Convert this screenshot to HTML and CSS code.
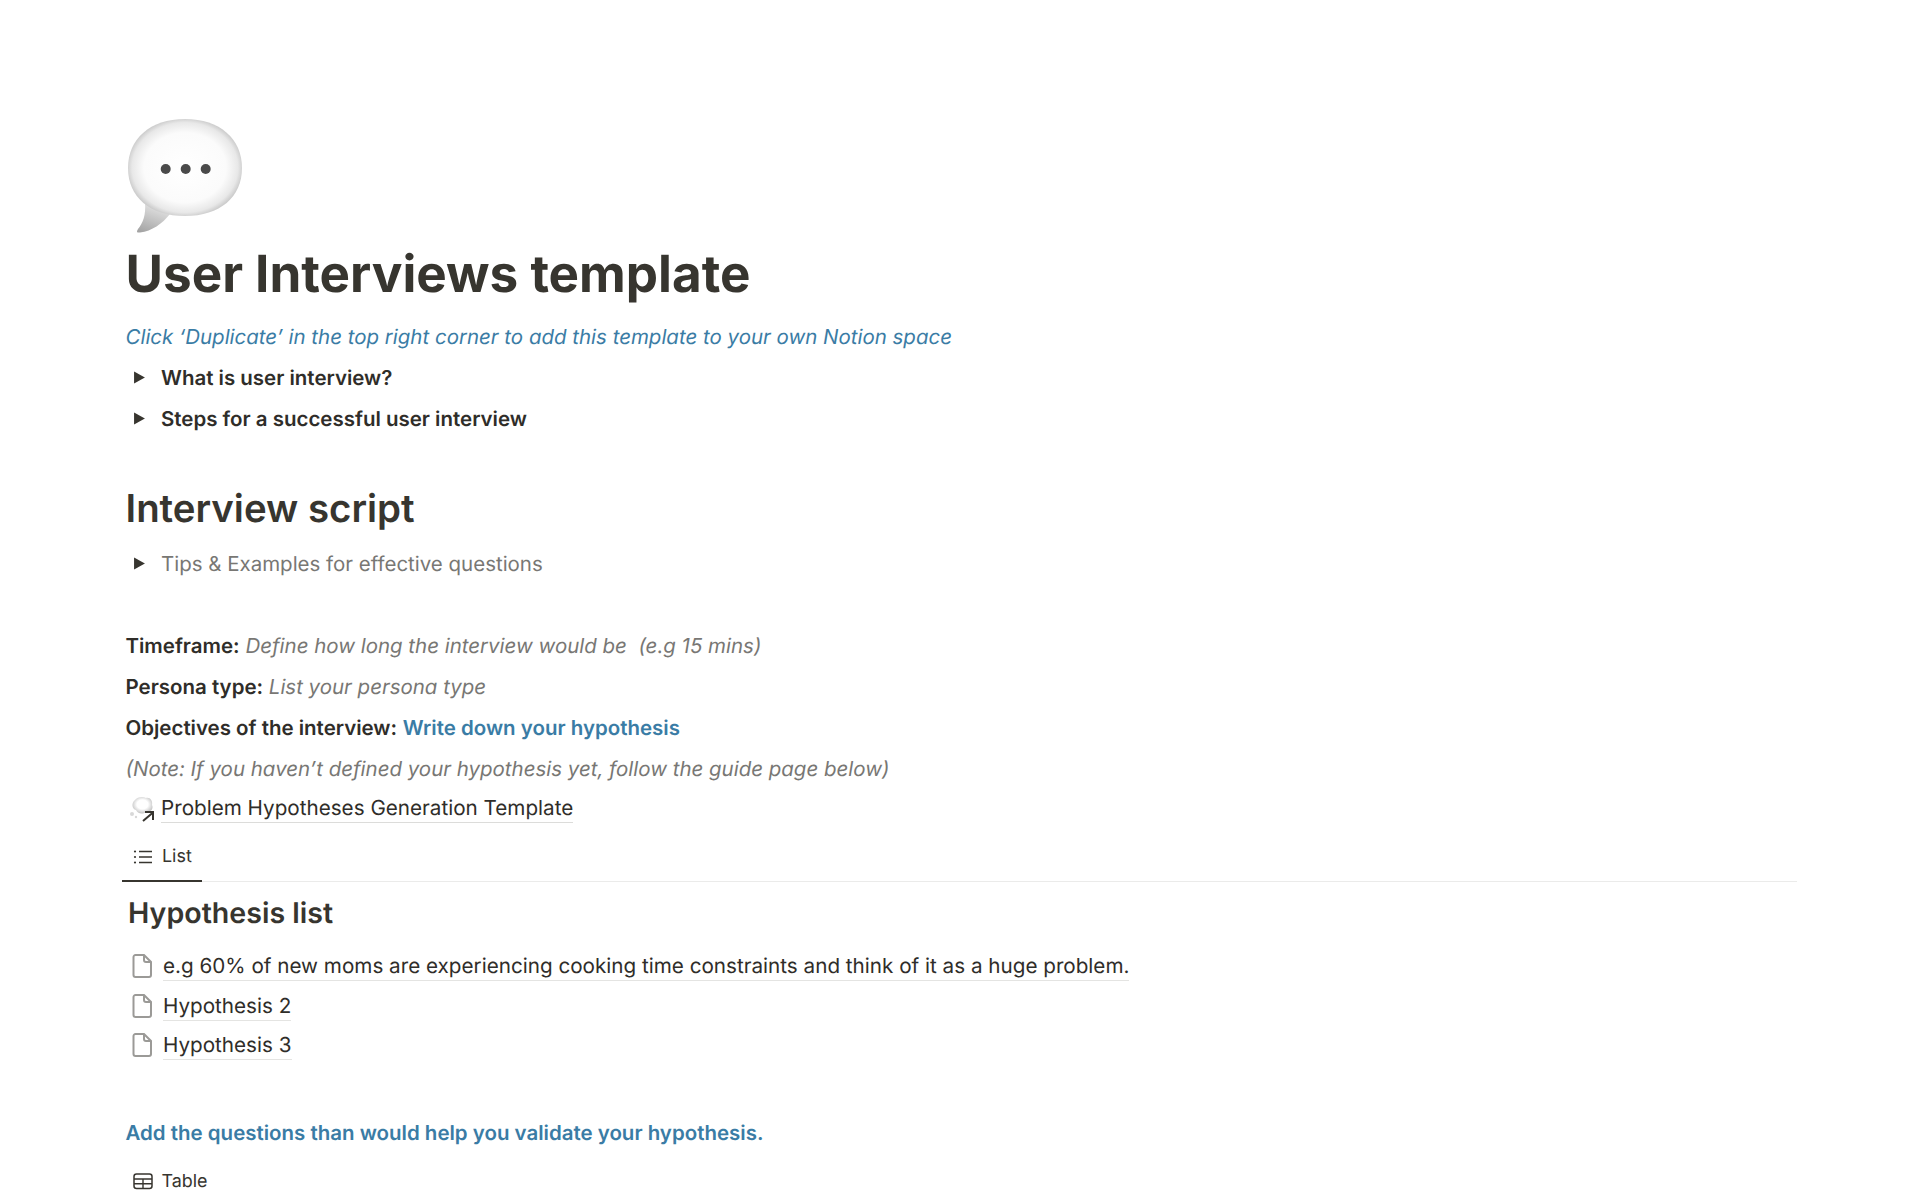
FILE: index.html
```html
<!DOCTYPE html>
<html lang="en">
<head>
<meta charset="utf-8">
<title>User Interviews template</title>
<link rel="stylesheet" href="styles.css">
</head>
<body>
<main class="page">
  <svg class="page-icon" viewBox="0 0 114 114" aria-hidden="true">
    <defs>
      <radialGradient id="bub" cx="50%" cy="50%" r="58%">
        <stop offset="0" stop-color="#fff"/>
        <stop offset="0.62" stop-color="#fbfbfb"/>
        <stop offset="0.8" stop-color="#e8e8e8"/>
        <stop offset="0.95" stop-color="#b4b4b4"/>
        <stop offset="1" stop-color="#a0a0a0"/>
      </radialGradient>
      <linearGradient id="tail" x1="0.6" y1="0" x2="0.2" y2="1">
        <stop offset="0" stop-color="#e6e6e6"/>
        <stop offset="1" stop-color="#a4a4a4"/>
      </linearGradient>
    </defs>
    <path d="M17 84 C18 96 15 104 10 110 C8 113 9 114 12 113.500 C24 112 34 105 42 95 Z" fill="url(#tail)"/>
    <path d="M57 0 C92 0 114 20 114 49 C114 78 92 97 57 97 C22 97 0 78 0 49 C0 20 22 0 57 0 Z" fill="url(#bub)"/>
    <circle cx="37.700" cy="50" r="5" fill="#4a4a4a"/>
    <circle cx="57.700" cy="50" r="5" fill="#4a4a4a"/>
    <circle cx="77.700" cy="50" r="5" fill="#4a4a4a"/>
  </svg>
  <h1 class="title">User Interviews template</h1>
  <p class="line line-first"><em class="blue">Click ‘Duplicate’ in the top right corner to add this template to your own Notion space</em></p>

  <div class="toggle"><svg class="caret" viewBox="0 0 12 12"><path d="M1 0.500 L11 6 L1 11.500 Z"/></svg><strong class="dark">What is user interview?</strong></div>
  <div class="toggle"><svg class="caret" viewBox="0 0 12 12"><path d="M1 0.500 L11 6 L1 11.500 Z"/></svg><strong class="dark">Steps for a successful user interview</strong></div>

  <h2 class="heading">Interview script</h2>
  <div class="toggle"><svg class="caret" viewBox="0 0 12 12"><path d="M1 0.500 L11 6 L1 11.500 Z"/></svg><span class="grey">Tips &amp; Examples for effective questions</span></div>

  <p class="line line-gap"><strong class="dark">Timeframe:</strong> <em class="grey">Define how long the interview would be&nbsp; (e.g 15 mins)</em></p>
  <p class="line"><strong class="dark">Persona type:</strong> <em class="grey">List your persona type</em></p>
  <p class="line"><strong class="dark">Objectives of the interview:</strong> <strong class="blue">Write down your hypothesis</strong></p>
  <p class="line"><em class="grey">(Note: If you haven’t defined your hypothesis yet, follow the guide page below)</em></p>

  <div class="page-link">
    <svg class="link-icon" viewBox="0 0 26 26" aria-hidden="true">
      <defs><radialGradient id="cl" cx="50%" cy="45%" r="55%"><stop offset="0.5" stop-color="#fff"/><stop offset="1" stop-color="#c4c4c4"/></radialGradient></defs>
      <path d="M6 4 C8 1 14 0 17 2 C21 1 24 5 23 9 C25 13 21 17 17 16 C13 19 8 17 7 14 C3 13 2 7 6 4 Z" fill="url(#cl)"/>
      <circle cx="3" cy="18" r="2" fill="#d8d8d8"/>
      <circle cx="7" cy="21" r="1.200" fill="#d8d8d8"/>
      <path d="M14 25 L24 16.500 M16 16 L24 16 L24 24" fill="none" stroke="#37352f" stroke-width="2"/>
    </svg>
    <span class="link-text">Problem Hypotheses Generation Template</span>
  </div>

  <div class="tabs">
    <div class="tab">
      <svg class="tab-icon" viewBox="0 0 20 20" aria-hidden="true"><path d="M6 4.500 H19 M6 10 H19 M6 15.500 H19" fill="none" stroke="#37352f" stroke-width="1.400"/><circle cx="2" cy="4.500" r="1.100" fill="#37352f"/><circle cx="2" cy="10" r="1.100" fill="#37352f"/><circle cx="2" cy="15.500" r="1.100" fill="#37352f"/></svg>
      <span>List</span>
    </div>
  </div>

  <h3 class="list-title">Hypothesis list</h3>
  <ul class="items">
    <li class="item"><svg class="doc" viewBox="0 0 20 24" aria-hidden="true"><path d="M3.500 1 H12 L19 8 V21 A2 2 0 0 1 17 23 H3.500 A2 2 0 0 1 1.500 21 V3 A2 2 0 0 1 3.500 1 Z M12 1 V6 A2 2 0 0 0 14 8 H19" fill="none" stroke="#9b9a97" stroke-width="2"/></svg><span class="item-text">e.g 60% of new moms are experiencing cooking time constraints and think of it as a huge problem.</span></li>
    <li class="item"><svg class="doc" viewBox="0 0 20 24" aria-hidden="true"><path d="M3.500 1 H12 L19 8 V21 A2 2 0 0 1 17 23 H3.500 A2 2 0 0 1 1.500 21 V3 A2 2 0 0 1 3.500 1 Z M12 1 V6 A2 2 0 0 0 14 8 H19" fill="none" stroke="#9b9a97" stroke-width="2"/></svg><span class="item-text">Hypothesis 2</span></li>
    <li class="item"><svg class="doc" viewBox="0 0 20 24" aria-hidden="true"><path d="M3.500 1 H12 L19 8 V21 A2 2 0 0 1 17 23 H3.500 A2 2 0 0 1 1.500 21 V3 A2 2 0 0 1 3.500 1 Z M12 1 V6 A2 2 0 0 0 14 8 H19" fill="none" stroke="#9b9a97" stroke-width="2"/></svg><span class="item-text">Hypothesis 3</span></li>
  </ul>

  <p class="line line-cta"><strong class="blue">Add the questions than would help you validate your hypothesis.</strong></p>

  <div class="tab tab-table">
    <svg class="tab-icon" viewBox="0 0 20 20" aria-hidden="true"><rect x="1" y="3" width="18" height="14.500" rx="2.500" fill="none" stroke="#37352f" stroke-width="1.500"/><path d="M1 8 H19 M1 12.700 H19 M10 8 V17.500" fill="none" stroke="#37352f" stroke-width="1.400"/></svg>
    <span>Table</span>
  </div>
</main>
</body>
</html>
```

FILE: styles.css
```css
* { box-sizing: border-box; }
html, body { margin: 0; padding: 0; background: #fff; }
body {
  height: 1199px;
  overflow: hidden;
  font-family: Inter, "Noto Sans", sans-serif;
  font-size: 20.48px;
  color: #37352f;
  text-rendering: geometricPrecision;
}
.page { width: 1920px; padding: 119px 123px 0 125.5px; }
.page-icon { display: block; width: 114px; height: 114px; margin-left: 2.5px; }
.title {
  margin: 12px 0 0;
  font-size: 51.2px;
  line-height: 58px;
  font-weight: 700;
  color: #37352f;
}
.line { margin: 0; height: 41px; line-height: 41px; white-space: pre-wrap; }
.line-first { margin-top: 13px; margin-bottom: -0.500px; }
.line-gap { margin-top: 41px; }
.line-cta { margin-top: 47px; }
em { font-style: italic; }
strong { font-weight: 600; }
.blue { color: #3a7ca5; }
.grey { color: #787774; }
.dark { color: #2f2d29; }
.toggle { display: flex; align-items: center; height: 41px; }
.caret { width: 13px; height: 13px; margin: 0 15px 0 7.500px; fill: #37352f; flex: none; }
.heading {
  margin: 44.500px 0 0;
  font-size: 38.4px;
  line-height: 52px;
  font-weight: 600;
  color: #37352f;
}
.heading + .toggle { margin-top: 8px; }
.page-link { display: flex; align-items: center; height: 38px; font-size: 20.67px; }
.link-icon { width: 26px; height: 26px; margin: 2px 6px 0 3.500px; flex: none; }
.link-text { color: #2f2d29; border-bottom: 1px solid #dcdcda; line-height: 28px; }
.tabs {
  margin-left: -3.500px;
  margin-top: 6.500px;
  border-bottom: 1px solid #ebebea;
  width: 1675px;
}
.tab { display: flex; align-items: center; gap: 9px; font-size: 17.92px; color: #37352f; padding-left: 11px; }
.tabs .tab { width: 80px; height: 48px; margin-bottom: -1px; border-bottom: 2.500px solid #37352f; }
.tab-icon { width: 20px; height: 20px; flex: none; }
.tab-table { margin-top: 16px; padding-left: 7px; height: 24px; }
.list-title {
  margin: 13px 0 0 2.500px;
  font-size: 28.6px;
  line-height: 36px;
  font-weight: 600;
  color: #37352f;
}
.items { list-style: none; margin: 16px 0 0 -0.500px; padding: 0; font-size: 20.67px; }
.item { display: flex; align-items: center; height: 39.500px; }
.doc { width: 20px; height: 24px; margin: 0 11px 0 7px; flex: none; }
.item-text { color: #2f2d29; border-bottom: 1px solid #e4e4e2; line-height: 29px; }
```
